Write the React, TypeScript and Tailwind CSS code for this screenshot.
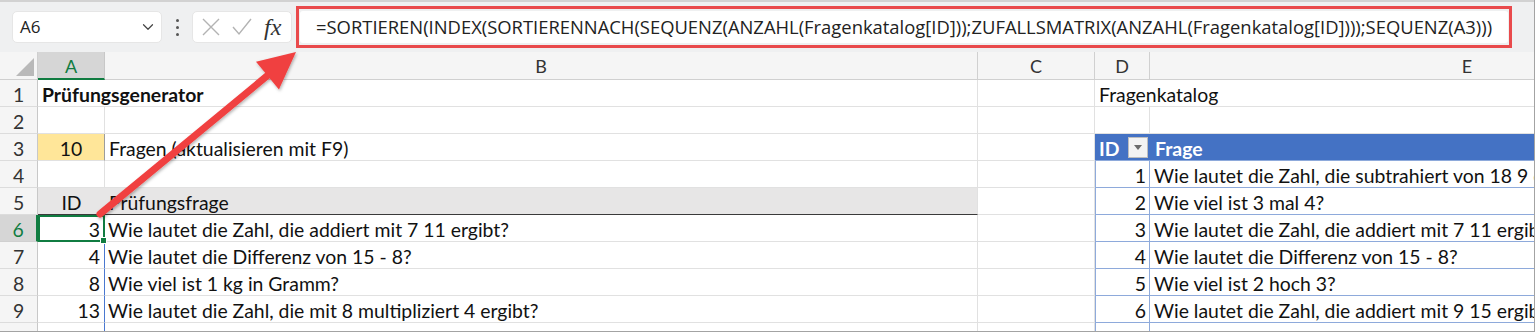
import React from "react";
import { ChevronDown } from "lucide-react";

const leftRows: { n: string; id: string; q: string }[] = [
  { n: "6", id: "3", q: "Wie lautet die Zahl, die addiert mit 7 11 ergibt?" },
  { n: "7", id: "4", q: "Wie lautet die Differenz von 15 - 8?" },
  { n: "8", id: "8", q: "Wie viel ist 1 kg in Gramm?" },
  { n: "9", id: "13", q: "Wie lautet die Zahl, die mit 8 multipliziert 4 ergibt?" },
  { n: "10", id: "9", q: "Wie lautet die Zahl, die durch 3 geteilt 4 ergibt?" },
];

const cat: { id: string; q: string }[] = [
  { id: "1", q: "Wie lautet die Zahl, die subtrahiert von 18 9 ergibt?" },
  { id: "2", q: "Wie viel ist 3 mal 4?" },
  { id: "3", q: "Wie lautet die Zahl, die addiert mit 7 11 ergibt?" },
  { id: "4", q: "Wie lautet die Differenz von 15 - 8?" },
  { id: "5", q: "Wie viel ist 2 hoch 3?" },
  { id: "6", q: "Wie lautet die Zahl, die addiert mit 9 15 ergibt?" },
  { id: "7", q: "Wie lautet die Zahl, die multipliziert mit 3 12 ergibt?" },
];

function RowHead({ n, sel }: { n: string; sel?: boolean }) {
  return (
    <div
      className={
        sel
          ? "w-[38px] shrink-0 h-full flex items-center justify-center bg-[#d6d6d6] text-[#107c41] border-r-2 border-r-[#107c41] border-b border-b-[#d0d0d0]"
          : "w-[38px] shrink-0 h-full flex items-center justify-center bg-[#f5f5f5] text-[#333] border-r border-r-[#c8c8c8] border-b border-b-[#dcdcdc]"
      }
    >
      {n}
    </div>
  );
}

export default function App() {
  const tip = { x: 296, y: 52 };
  const tail = { x: 100, y: 214 };
  const dx = tip.x - tail.x;
  const dy = tip.y - tail.y;
  const len = Math.sqrt(dx * dx + dy * dy);
  const ux = dx / len;
  const uy = dy / len;
  const L = 37;
  const W = 18;
  const bx = tip.x - L * ux;
  const by = tip.y - L * uy;
  const nx = -uy;
  const ny = ux;
  const w1 = `${bx + W * nx},${by + W * ny}`;
  const w2 = `${bx - W * nx},${by - W * ny}`;

  return (
    <div className="relative w-[1536px] h-[333px] overflow-hidden bg-white font-['Lato',sans-serif] text-[#111]">
      <div className="w-[1535px] h-[332px] overflow-hidden border-r border-b border-[#a3a3a3] flex flex-col">
        {/* toolbar */}
        <div className="h-[52px] shrink-0 bg-[#eff0f1] border-t-2 border-[#d2d2d2] flex items-center">
          <div className="ml-[12px] w-[150px] h-[32px] bg-white rounded-[5px] border border-[#e6e6e6] flex items-center justify-between pl-[7px] pr-[4px] text-[17px] font-['Open_Sans',sans-serif] text-[#222]">
            <span>A6</span>
            <ChevronDown size={18} strokeWidth={1.6} color="#444" />
          </div>
          <div className="w-[30px] h-[32px] flex flex-col items-center justify-center gap-[4px]">
            <div className="w-[3px] h-[3px] rounded-full bg-[#555]" />
            <div className="w-[3px] h-[3px] rounded-full bg-[#555]" />
            <div className="w-[3px] h-[3px] rounded-full bg-[#555]" />
          </div>
          <div className="w-[100px] h-[32px] bg-white rounded-[5px] border border-[#e6e6e6] flex items-center">
            <svg width="20" height="20" viewBox="0 0 20 20" className="ml-[8px]">
              <path d="M2 2 L18 18 M18 2 L2 18" stroke="#b3b3b3" strokeWidth="1.4" fill="none" />
            </svg>
            <svg width="22" height="20" viewBox="0 0 22 20" className="ml-[10px]">
              <path d="M2 10 L8 17 L20 2" stroke="#b3b3b3" strokeWidth="1.4" fill="none" />
            </svg>
            <span className="ml-[11px] text-[24px] italic font-['Liberation_Serif',serif] text-[#333] leading-none">fx</span>
          </div>
          <div className="ml-[4px] w-[1216px] h-[42px] border-[3px] border-[#e94a4c] flex items-center px-[1px]">
            <div className="w-full h-[32px] bg-white rounded-[3px] flex items-center pl-[16px] text-[18.4px] font-['Open_Sans',sans-serif] text-[#222] whitespace-nowrap overflow-hidden">
              =SORTIEREN(INDEX(SORTIERENNACH(SEQUENZ(ANZAHL(Fragenkatalog[ID]));ZUFALLSMATRIX(ANZAHL(Fragenkatalog[ID])));SEQUENZ(A3)))
            </div>
          </div>
        </div>

        {/* column headers */}
        <div className="h-[28px] shrink-0 flex text-[18px] text-[#333] *:pt-[2px]">
          <div className="w-[38px] shrink-0 h-full bg-[#f5f5f5] border-r border-b border-[#cfcfcf] flex items-end justify-end p-[3px]">
            <svg width="18" height="18" viewBox="0 0 18 18">
              <polygon points="18,0 18,18 0,18" fill="#b9b9b9" />
            </svg>
          </div>
          <div className="w-[67px] shrink-0 h-full bg-[#d6d6d6] text-[#107c41] border-r border-r-[#c8c8c8] border-b-2 border-b-[#107c41] flex items-center justify-center">A</div>
          <div className="w-[873px] shrink-0 h-full bg-[#f5f5f5] border-r border-b border-[#d0d0d0] flex items-center justify-center">B</div>
          <div className="w-[117px] shrink-0 h-full bg-[#f5f5f5] border-r border-b border-[#d0d0d0] flex items-center justify-center">C</div>
          <div className="w-[55px] shrink-0 h-full bg-[#f5f5f5] border-r border-b border-[#d0d0d0] flex items-center justify-center">D</div>
          <div className="w-[634px] shrink-0 h-full bg-[#f5f5f5] border-b border-[#d0d0d0] flex items-center justify-center">E</div>
        </div>

        {/* grid */}
        <div className="flex flex-col text-[19.4px]">
          {/* row 1 */}
          <div className="h-[27px] flex *:pt-[3px]">
            <RowHead n="1" />
            <div className="w-[940px] shrink-0 h-full border-r border-b border-[#e1e1e1] flex items-center pl-[4px] font-bold">Prüfungsgenerator</div>
            <div className="w-[117px] shrink-0 h-full border-r border-b border-[#e1e1e1]" />
            <div className="flex-1 h-full border-b border-[#e1e1e1] flex items-center pl-[4px]">Fragenkatalog</div>
          </div>
          {/* row 2 */}
          <div className="h-[27px] flex *:pt-[3px]">
            <RowHead n="2" />
            <div className="w-[67px] shrink-0 h-full border-r border-b border-[#e1e1e1]" />
            <div className="w-[873px] shrink-0 h-full border-r border-b border-[#e1e1e1]" />
            <div className="w-[117px] shrink-0 h-full border-r border-b border-[#e1e1e1]" />
            <div className="w-[55px] shrink-0 h-full border-r border-b border-[#e1e1e1]" />
            <div className="flex-1 h-full border-b border-[#e1e1e1]" />
          </div>
          {/* row 3 */}
          <div className="h-[27px] flex *:pt-[3px]">
            <RowHead n="3" />
            <div className="w-[67px] shrink-0 h-full bg-[#ffe699] border-r border-b border-r-[#9c9c9c] border-b-[#e1e1e1] flex items-center justify-center">10</div>
            <div className="w-[873px] shrink-0 h-full border-r border-b border-[#e1e1e1] flex items-center pl-[4px]">Fragen (aktualisieren mit F9)</div>
            <div className="w-[117px] shrink-0 h-full border-r border-b border-[#e1e1e1]" />
            <div className="w-[55px] shrink-0 h-full bg-[#4472c4] border-b border-[#8eaadb] flex items-center pl-[4px] text-white font-bold">
              <span>ID</span>
              <div className="ml-auto mr-[2px] -mt-[3px] w-[20px] h-[21px] bg-[#f3f3f3] border border-[#bdbdbd] flex items-center justify-center">
                <svg width="8" height="5" viewBox="0 0 8 5">
                  <polygon points="0,0 8,0 4,5" fill="#6b6b6b" />
                </svg>
              </div>
            </div>
            <div className="flex-1 h-full bg-[#4472c4] border-b border-[#8eaadb] flex items-center pl-[5px] text-white font-bold">Frage</div>
          </div>
          {/* row 4 */}
          <div className="h-[27px] flex *:pt-[3px]">
            <RowHead n="4" />
            <div className="w-[67px] shrink-0 h-full border-r border-b border-[#e1e1e1]" />
            <div className="w-[873px] shrink-0 h-full border-r border-b border-[#e1e1e1]" />
            <div className="w-[117px] shrink-0 h-full border-r border-b border-[#e1e1e1]" />
            <div className="w-[55px] shrink-0 h-full border-l border-r border-b border-[#8eaadb] flex items-center justify-end pr-[3px]">{cat[0].id}</div>
            <div className="flex-1 h-full border-b border-[#8eaadb] flex items-center pl-[4px] whitespace-nowrap overflow-hidden">{cat[0].q}</div>
          </div>
          {/* row 5 */}
          <div className="h-[27px] flex *:pt-[3px]">
            <RowHead n="5" />
            <div className="w-[67px] shrink-0 h-full bg-[#e7e6e6] border-b border-[#3a3a3a] flex items-center justify-center">ID</div>
            <div className="w-[873px] shrink-0 h-full bg-[#e7e6e6] border-r border-r-[#e1e1e1] border-b border-b-[#3a3a3a] flex items-center pl-[4px]">Prüfungsfrage</div>
            <div className="w-[117px] shrink-0 h-full border-r border-b border-[#e1e1e1]" />
            <div className="w-[55px] shrink-0 h-full border-l border-r border-b border-[#8eaadb] flex items-center justify-end pr-[3px]">{cat[1].id}</div>
            <div className="flex-1 h-full border-b border-[#8eaadb] flex items-center pl-[4px] whitespace-nowrap overflow-hidden">{cat[1].q}</div>
          </div>
          {/* rows 6-10 */}
          {leftRows.map((r, i) => (
            <div key={r.n} className="h-[27px] flex *:pt-[3px]">
              <RowHead n={r.n} sel={i === 0} />
              {i === 0 ? (
                <div className="relative w-[67px] shrink-0 h-full border-2 border-[#107c41] flex items-center justify-end pr-[3px]">
                  {r.id}
                  <div className="absolute right-[-4px] bottom-[-4px] w-[7px] h-[7px] bg-[#107c41] border border-white" />
                </div>
              ) : (
                <div className="w-[67px] shrink-0 h-full border-r border-b border-r-[#4a78d0] border-b-[#e1e1e1] flex items-center justify-end pr-[4px]">{r.id}</div>
              )}
              <div className="w-[873px] shrink-0 h-full border-r border-b border-[#e1e1e1] flex items-center pl-[3px] whitespace-nowrap">{r.q}</div>
              <div className="w-[117px] shrink-0 h-full border-r border-b border-[#e1e1e1]" />
              <div className="w-[55px] shrink-0 h-full border-l border-r border-b border-[#8eaadb] flex items-center justify-end pr-[3px]">{cat[i + 2].id}</div>
              <div className="flex-1 h-full border-b border-[#8eaadb] flex items-center pl-[4px] whitespace-nowrap overflow-hidden">{cat[i + 2].q}</div>
            </div>
          ))}
        </div>
      </div>

      {/* annotation arrow */}
      <svg className="absolute left-0 top-0 pointer-events-none" width="1536" height="333" viewBox="0 0 1536 333">
        <defs>
          <filter id="sh" x="-20%" y="-20%" width="140%" height="140%">
            <feDropShadow dx="1" dy="1.5" stdDeviation="1.5" floodColor="#000" floodOpacity="0.3" />
          </filter>
        </defs>
        <g filter="url(#sh)">
          <line x1={tail.x} y1={tail.y} x2={bx + ux * 2} y2={by + uy * 2} stroke="#f04040" strokeWidth="7" strokeLinecap="round" />
          <polygon points={`${tip.x},${tip.y} ${w1} ${w2}`} fill="#f04040" />
        </g>
      </svg>
    </div>
  );
}
